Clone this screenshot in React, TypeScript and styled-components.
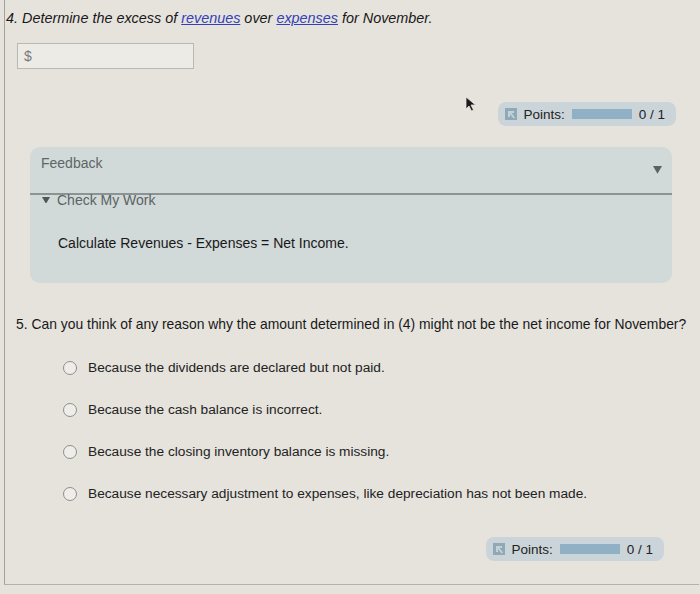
import React from 'react';
import styled, { createGlobalStyle } from 'styled-components';

const GlobalStyle = createGlobalStyle`
  html, body {
    margin: 0;
    padding: 0;
    background: #e6e3dd;
    font-family: "Liberation Sans", Arial, sans-serif;
    color: #1e1e1e;
  }
`;

const Page = styled.div`
  position: relative;
  width: 695px;
  height: 585px;
  margin-left: 4px;
  border-left: 1px solid #a3a19c;
  border-bottom: 1px solid #b3b1ab;
  box-sizing: border-box;
  overflow: hidden;
`;

const Question = styled.div<{ $italic?: boolean }>`
  font-size: ${(p) => (p.$italic ? '14.4px' : '13.9px')};
  font-style: ${(p) => (p.$italic ? 'italic' : 'normal')};
  line-height: 18px;
  color: #181818;
  padding-left: ${(p) => (p.$italic ? '1px' : '11px')};
`;

const TermLink = styled.span`
  color: #3340b8;
  text-decoration: underline;
`;

const AnswerInput = styled.div`
  margin: 16px 0 0 12px;
  width: 177px;
  height: 26px;
  border: 1px solid #bab8b2;
  background: #ecebe6;
  box-sizing: border-box;
  display: flex;
  align-items: center;
  padding-left: 6px;
  font-size: 14px;
  color: #7a7a7a;
`;

const PointsRow = styled.div<{ $right: number; $top: number }>`
  display: flex;
  justify-content: flex-end;
  padding-right: ${(p) => p.$right}px;
  margin-top: ${(p) => p.$top}px;
`;

const PointsPill = styled.div`
  display: flex;
  align-items: center;
  height: 24px;
  padding: 0 11px 0 7px;
  border-radius: 8px;
  background: #cbd5d9;
  font-size: 13.5px;
  color: #222;
`;

const PointsLabel = styled.span`
  margin: 0 7px 0 6px;
`;

const PointsBar = styled.div`
  width: 60px;
  height: 10px;
  background: #8fb0c5;
  margin-right: 7px;
`;

const FeedbackBox = styled.div`
  margin: 21px 0 0 25px;
  width: 642px;
  height: 136px;
  border-radius: 10px;
  background: #d1d9d9;
  box-sizing: border-box;
`;

const FeedbackHeader = styled.div`
  height: 46px;
  display: flex;
  align-items: center;
  justify-content: space-between;
  padding: 0 10px 0 11px;
  border-bottom: 2px solid #8b9494;
  font-size: 14px;
  color: #5e6666;
`;

const HeaderTitle = styled.span`
  margin-top: -14px;
`;

const CheckRow = styled.div`
  display: flex;
  align-items: center;
  gap: 7px;
  padding: 0 0 0 12px;
  height: 12px;
  margin-top: -1px;
  font-size: 14px;
  color: #5b6363;
`;

const HintText = styled.div`
  padding: 29px 0 0 28px;
  font-size: 14px;
  color: #181818;
`;

const OptionList = styled.div`
  display: flex;
  flex-direction: column;
  gap: 21px;
  margin: 24px 0 0 58px;
`;

const Option = styled.label`
  display: flex;
  align-items: center;
  gap: 11px;
  height: 21px;
  font-size: 13.7px;
  color: #222;
`;

const Radio = styled.span`
  width: 12px;
  height: 12px;
  border-radius: 50%;
  border: 1.5px solid #8e8e8c;
  background: #eeede9;
  flex-shrink: 0;
`;

const Cursor = styled.svg`
  position: absolute;
  left: 460px;
  top: 96px;
`;

function Triangle({ color, size }: { color: string; size: number }) {
  return (
    <svg width={size} height={size * 0.85} viewBox="0 0 10 8.5">
      <path d="M0 0 L10 0 L5 8.5 Z" fill={color} />
    </svg>
  );
}

function PointsIcon() {
  return (
    <svg width="12" height="12" viewBox="0 0 12 12">
      <rect x="0" y="0" width="12" height="12" fill="#8fa9b7" />
      <path d="M3 3 L9 3 L9 5 L6.5 5 L10 9.5 L8.5 10.5 L5 6 L5 9 L3 9 Z" fill="#c4d2d8" />
    </svg>
  );
}

function Points({ right, top }: { right: number; top: number }) {
  return (
    <PointsRow $right={right} $top={top}>
      <PointsPill>
        <PointsIcon />
        <PointsLabel>Points:</PointsLabel>
        <PointsBar />
        <span>0 / 1</span>
      </PointsPill>
    </PointsRow>
  );
}

const options = [
  'Because the dividends are declared but not paid.',
  'Because the cash balance is incorrect.',
  'Because the closing inventory balance is missing.',
  'Because necessary adjustment to expenses, like depreciation has not been made.',
];

export default function App() {
  return (
    <>
      <GlobalStyle />
      <Page>
        <div style={{ height: 9 }} />
        <Question $italic>
          4. Determine the excess of <TermLink>revenues</TermLink> over <TermLink>expenses</TermLink> for November.
        </Question>
        <AnswerInput>$</AnswerInput>
        <Points right={23} top={33} />
        <FeedbackBox>
          <FeedbackHeader>
            <HeaderTitle>Feedback</HeaderTitle>
            <Triangle color="#5a6262" size={9} />
          </FeedbackHeader>
          <CheckRow>
            <Triangle color="#4e5656" size={8} />
            Check My Work
          </CheckRow>
          <HintText>Calculate Revenues - Expenses = Net Income.</HintText>
        </FeedbackBox>
        <div style={{ height: 32 }} />
        <Question>
          5. Can you think of any reason why the amount determined in (4) might not be the net income for November?
        </Question>
        <OptionList>
          {options.map((o) => (
            <Option key={o}>
              <Radio />
              {o}
            </Option>
          ))}
        </OptionList>
        <Points right={35} top={33} />
        <Cursor width="12" height="16" viewBox="0 0 12 16">
          <path d="M1 1 L1 13 L4 10 L6.5 15 L8.5 14 L6 9 L10.5 9 Z" fill="#1a1a1a" stroke="#e6e3dd" strokeWidth="0.8" />
        </Cursor>
      </Page>
    </>
  );
}
